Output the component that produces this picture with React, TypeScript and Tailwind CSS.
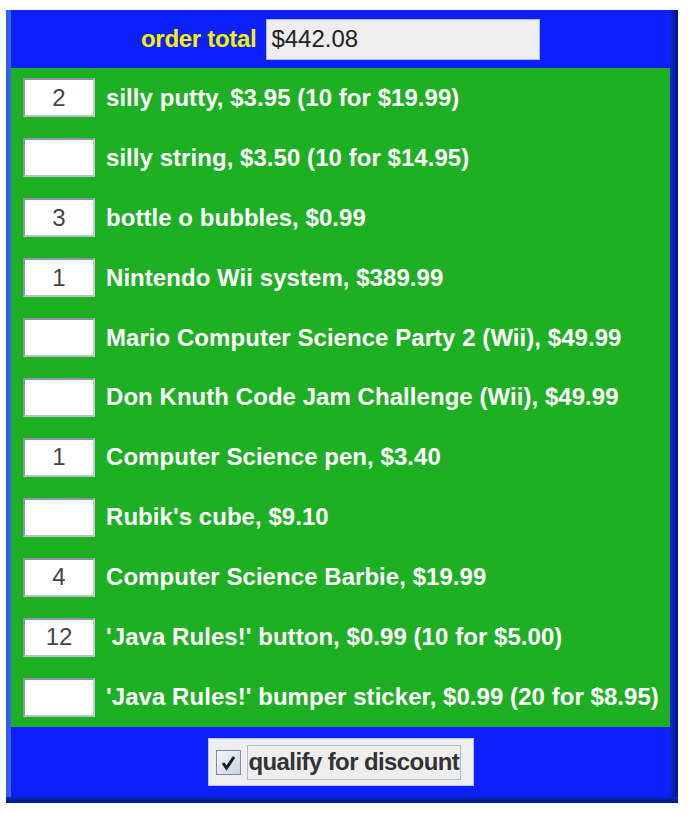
const ITEMS = [
  { qty: '2', label: 'silly putty, $3.95 (10 for $19.99)' },
  { qty: '', label: 'silly string, $3.50 (10 for $14.95)' },
  { qty: '3', label: 'bottle o bubbles, $0.99' },
  { qty: '1', label: 'Nintendo Wii system, $389.99' },
  { qty: '', label: 'Mario Computer Science Party 2 (Wii), $49.99' },
  { qty: '', label: 'Don Knuth Code Jam Challenge (Wii), $49.99' },
  { qty: '1', label: 'Computer Science pen, $3.40' },
  { qty: '', label: "Rubik's cube, $9.10" },
  { qty: '4', label: 'Computer Science Barbie, $19.99' },
  { qty: '12', label: "'Java Rules!' button, $0.99 (10 for $5.00)" },
  { qty: '', label: "'Java Rules!' bumper sticker, $0.99 (20 for $8.95)" },
];

const FONT = { fontFamily: '"Liberation Sans", Arial, sans-serif' };

export default function App() {
  return (
    <div className="w-[688px] h-[814px] bg-white pt-[10px] pl-[6px]" style={FONT}>
      <div className="w-[672px] flex flex-col">
        <div className="flex">
          <div className="w-[5px] bg-gradient-to-r from-[#2a55e8] to-[#3b6cf0]" />
          <div className="w-[659px] flex flex-col bg-[#0b20fb]">
            {/* top bar */}
            <div className="h-[58px] flex items-center pl-[130px] gap-[10px]">
              <span className="text-[#f4f000] text-[24px] font-bold tracking-[-0.3px] leading-none">
                order total
              </span>
              <div className="w-[274px] h-[41px] bg-[#eeeeee] border border-[#a9bcd8] flex items-center px-[4px] text-[24px] text-[#222] leading-none">
                $442.08
              </div>
            </div>

            {/* item list */}
            <div className="bg-[#1db022] flex flex-col h-[659px]">
              {ITEMS.map((item, i) => (
                <div key={i} className="h-[60px] flex items-center pl-[12px] gap-[11px]">
                  <div className="w-[72px] h-[39px] bg-white border-t-2 border-l-2 border-t-[#8d96a6] border-l-[#8d96a6] border-b-2 border-r-2 border-b-[#b9c0cc] border-r-[#c8ced8] flex items-center justify-center text-[24px] text-[#444] leading-none">
                    {item.qty}
                  </div>
                  <span className="text-white text-[24px] font-bold tracking-[0.05px] leading-none whitespace-nowrap">
                    {item.label}
                  </span>
                </div>
              ))}
            </div>

            {/* bottom bar */}
            <div className="h-[70px] flex items-start justify-center pt-[11px]">
              <div className="w-[266px] h-[48px] bg-[#eeeeee] border border-[#b8c4dc] flex items-center pl-[7px] gap-[6px]">
                <div className="w-[25px] h-[25px] border border-[#7a8aa8] bg-gradient-to-br from-[#f4f6fa] to-[#c8d2e2] flex items-center justify-center">
                  <svg width="17" height="17" viewBox="0 0 17 17">
                    <path d="M3 9 L6.5 14 L14 3" fill="none" stroke="#1c1c1c" strokeWidth="3" />
                  </svg>
                </div>
                <div className="h-[35px] border border-[#a8bed8] flex items-center px-[1px] text-[24px] font-bold text-[#333] tracking-[-0.6px] leading-none whitespace-nowrap">
                  qualify for discount
                </div>
              </div>
            </div>
          </div>
          <div className="w-[8px] bg-gradient-to-r from-[#0a2ad0] to-[#001590]" />
        </div>
        <div className="h-[6px] bg-gradient-to-b from-[#0a2ac0] to-[#001580]" />
      </div>
    </div>
  );
}
